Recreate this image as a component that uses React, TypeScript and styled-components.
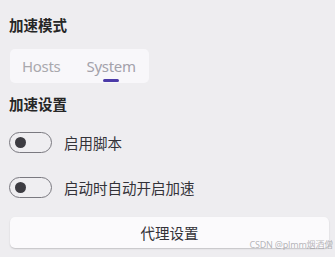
import React, { useState } from "react";
import styled, { createGlobalStyle } from "styled-components";

const Global = createGlobalStyle`
  html, body { margin: 0; padding: 0; background: #eeedf0; }
  body { font-family: "Noto Sans", "Noto Sans CJK SC", sans-serif; }
`;

const Page = styled.div`
  position: relative;
  width: 335px;
  height: 257px;
  box-sizing: border-box;
  padding: 14px 6px 0 9px;
  background: #eeedf0;
  display: flex;
  flex-direction: column;
  overflow: hidden;
`;

const SectionTitle = styled.div<{ $mt: number }>`
  margin-top: ${(p) => p.$mt}px;
  font-family: "Noto Sans CJK SC", sans-serif;
  font-size: 14.5px;
  line-height: 22px;
  font-weight: 700;
  color: #262626;
`;

const TabBar = styled.div`
  margin-top: 13px;
  margin-left: 1px;
  align-self: flex-start;
  display: flex;
  height: 34px;
  background: #f8f7fa;
  border-radius: 5px;
`;

const Tab = styled.button<{ $active?: boolean; $pl: number; $pr: number }>`
  position: relative;
  border: 0;
  background: transparent;
  padding: 0 ${(p) => p.$pr}px 0 ${(p) => p.$pl}px;
  font-family: "Noto Sans", sans-serif;
  font-size: 15px;
  letter-spacing: -0.3px;
  color: ${(p) => (p.$active ? "#a3a1aa" : "#a9a8ad")};
  cursor: pointer;
  &::after {
    content: "";
    display: ${(p) => (p.$active ? "block" : "none")};
    position: absolute;
    left: 50%;
    bottom: 1px;
    width: 16px;
    height: 3px;
    margin-left: -8px;
    border-radius: 2px;
    background: #4b3aa8;
  }
`;

const Row = styled.label<{ $mt?: number }>`
  display: flex;
  align-items: center;
  height: 45px;
  gap: 12px;
  margin-top: ${(p) => p.$mt ?? 0}px;
  cursor: pointer;
`;

const Switch = styled.span<{ $on: boolean }>`
  width: 43px;
  height: 21px;
  box-sizing: border-box;
  border: 1.5px solid #7a7980;
  border-radius: 11px;
  background: ${(p) => (p.$on ? "#4b3aa8" : "#efeef1")};
  display: flex;
  align-items: center;
  padding: 0 4px;
  justify-content: ${(p) => (p.$on ? "flex-end" : "flex-start")};
`;

const Thumb = styled.span<{ $on: boolean }>`
  width: 11px;
  height: 11px;
  border-radius: 50%;
  background: ${(p) => (p.$on ? "#ffffff" : "#3d3c42")};
  margin-left: 1px;
`;

const RowText = styled.span`
  font-family: "Noto Sans CJK SC", sans-serif;
  font-size: 14.5px;
  color: #333238;
`;

const Button = styled.button`
  margin-top: 7px;
  margin-left: 1px;
  height: 31px;
  border: 0;
  border-radius: 5px;
  background: #fbfafc;
  box-shadow: 0 1px 1.5px rgba(0, 0, 0, 0.18);
  font-family: "Noto Sans CJK SC", sans-serif;
  font-size: 14.5px;
  color: #333238;
  cursor: pointer;
`;

const Watermark = styled.div`
  position: absolute;
  right: 2px;
  bottom: 6px;
  font-family: "Noto Sans", "Noto Sans CJK SC", sans-serif;
  font-size: 9px;
  letter-spacing: -0.2px;
  color: rgba(150, 150, 155, 0.7);
  pointer-events: none;
`;

export default function App() {
  const [mode, setMode] = useState<"hosts" | "system">("system");
  const [script, setScript] = useState(false);
  const [auto, setAuto] = useState(false);
  return (
    <>
      <Global />
      <Page>
        <SectionTitle $mt={0}>加速模式</SectionTitle>
        <TabBar>
          <Tab $pl={12} $pr={13} $active={mode === "hosts"} onClick={() => setMode("hosts")}>
            Hosts
          </Tab>
          <Tab $pl={13} $pr={13} $active={mode === "system"} onClick={() => setMode("system")}>
            System
          </Tab>
        </TabBar>
        <SectionTitle $mt={10}>加速设置</SectionTitle>
        <Row $mt={5} onClick={() => setScript(!script)}>
          <Switch $on={script}>
            <Thumb $on={script} />
          </Switch>
          <RowText>启用脚本</RowText>
        </Row>
        <Row onClick={() => setAuto(!auto)}>
          <Switch $on={auto}>
            <Thumb $on={auto} />
          </Switch>
          <RowText>启动时自动开启加速</RowText>
        </Row>
        <Button>代理设置</Button>
        <Watermark>CSDN @plmm烟酒僧</Watermark>
      </Page>
    </>
  );
}
